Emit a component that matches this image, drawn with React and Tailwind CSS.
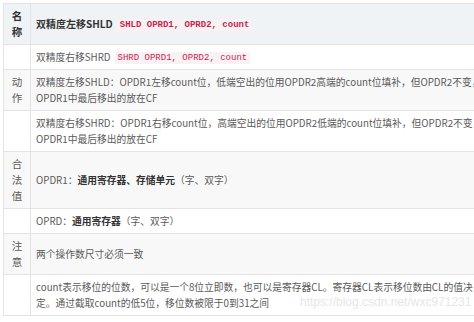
const rows = [
  { label: ['名', '称'], bg: 'bg-[#eff3f5]', head: true },
  { label: [], bg: 'bg-white' },
  { label: ['动', '作'], bg: 'bg-[#f8f8f8]' },
  { label: [], bg: 'bg-white' },
  { label: ['合', '法', '值'], bg: 'bg-[#f8f8f8]' },
  { label: [], bg: 'bg-white' },
  { label: ['注', '意'], bg: 'bg-[#f8f8f8]' },
  { label: [], bg: 'bg-white' },
];

const Code = ({ children, bold }) => (
  <code
    className={`ml-[4px] rounded-[2px] bg-[#f9f2f4] px-[3px] py-[1px] align-[1px] font-['Liberation_Mono',monospace] text-[9px] leading-none text-[#c7254e] ${bold ? 'font-bold' : ''}`}
  >
    {children}
  </code>
);

const cells = [
  <span className="font-bold text-[#333]">
    双精度左移SHLD<Code bold>SHLD OPRD1, OPRD2, count</Code>
  </span>,
  <span>
    双精度右移SHRD<Code>SHRD OPRD1, OPRD2, count</Code>
  </span>,
  <span>
    双精度左移SHLD：OPDR1左移count位，低端空出的位用OPDR2高端的count位填补，但OPDR2不变，
    <br />
    OPDR1中最后移出的放在CF
  </span>,
  <span>
    双精度右移SHRD：OPDR1右移count位，高端空出的位用OPDR2低端的count位填补，但OPDR2不变，
    <br />
    OPDR1中最后移出的放在CF
  </span>,
  <span>
    OPDR1：<b className="text-[#333]">通用寄存器、存储单元</b>（字、双字）
  </span>,
  <span>
    OPRD：<b className="text-[#333]">通用寄存器</b>（字、双字）
  </span>,
  <span>两个操作数尺寸必须一致</span>,
  <span>
    count表示移位的位数，可以是一个8位立即数，也可以是寄存器CL。寄存器CL表示移位数由CL的值决
    <br />
    定。通过截取count的低5位，移位数被限于0到31之间
  </span>,
];

export default function App() {
  return (
    <div className="relative h-[322px] w-[474px] overflow-hidden bg-white font-['Noto_Sans_CJK_SC','Noto_Sans',sans-serif] text-[9.75px] leading-[16px] text-[#5a5a5a]">
      <div className="pl-[3px] pt-[3px]">
        <table className="w-[480px] table-fixed border-collapse">
          <colgroup>
            <col className="w-[27px]" />
            <col />
          </colgroup>
          <tbody>
            {rows.map((r, i) => (
              <tr key={i} className={`${r.bg} border-t border-[#e3e3e3]`}>
                <td
                  className={`border-r border-l border-[#e3e3e3] py-[4px] text-center align-middle text-[10.5px] ${r.head ? 'font-bold text-[#333]' : ''}`}
                >
                  {r.label.map((c) => (
                    <div key={c}>{c}</div>
                  ))}
                </td>
                <td
                  className={`whitespace-nowrap py-[4px] pl-[5px] align-middle ${r.head ? 'text-[10px]' : ''}`}
                >
                  {cells[i]}
                </td>
              </tr>
            ))}
            <tr className="border-t border-[#e3e3e3]">
              <td colSpan={2} />
            </tr>
          </tbody>
        </table>
      </div>
      <div className="absolute left-[300px] top-[294px] font-['Liberation_Sans',sans-serif] text-[12px] leading-[16px] text-[#e6e6e6]">
        https://blog.csdn.net/wxc971231
      </div>
    </div>
  );
}
